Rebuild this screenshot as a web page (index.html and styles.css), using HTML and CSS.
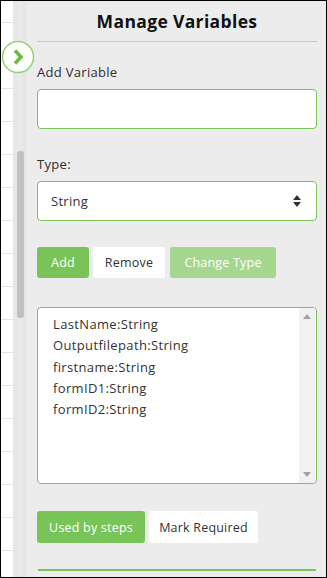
FILE: index.html
```html
<!DOCTYPE html>
<html>
<head>
<meta charset="utf-8">
<link rel="stylesheet" href="styles.css">
</head>
<body>
<div class="frame">
  <div class="sheet"></div>
  <div class="gutter"><div class="thumb"></div></div>
  <div class="panel">
    <h1 class="title">Manage Variables</h1>
    <label class="label label-first">Add Variable</label>
    <div class="input"></div>
    <label class="label label-type">Type:</label>
    <div class="select">
      <span>String</span>
      <svg class="updown" width="8" height="12" viewBox="0 0 8 12"><path d="M4 0 L8 5 L0 5 Z M4 12 L8 7 L0 7 Z" fill="#333"/></svg>
    </div>
    <div class="btnrow row1">
      <button class="btn btn-green w-add">Add</button>
      <button class="btn btn-white w-remove">Remove</button>
      <button class="btn btn-light w-change">Change Type</button>
    </div>
    <div class="list">
      <div class="items">
        <div class="item">LastName:String</div>
        <div class="item">Outputfilepath:String</div>
        <div class="item">firstname:String</div>
        <div class="item">formID1:String</div>
        <div class="item">formID2:String</div>
      </div>
      <div class="lscroll">
        <svg width="8" height="5" viewBox="0 0 8 5"><path d="M4 0 L8 5 L0 5 Z" fill="#a3a3a3"/></svg>
        <svg width="8" height="5" viewBox="0 0 8 5"><path d="M0 0 L8 0 L4 5 Z" fill="#a3a3a3"/></svg>
      </div>
    </div>
    <div class="btnrow row2">
      <button class="btn btn-green w-used">Used by steps</button>
      <button class="btn btn-white w-mark">Mark Required</button>
    </div>
    <div class="greenline"></div>
  </div>
  <div class="toggle">
    <svg width="34" height="34" viewBox="0 0 34 34"><circle cx="17" cy="17" r="15.5" fill="#fff" stroke="#93d175" stroke-width="1.5"/><path d="M14 10.5 L20 17 L14 23.5" fill="none" stroke="#6bbd45" stroke-width="3.6" stroke-linejoin="miter"/></svg>
  </div>
</div>
</body>
</html>
```
FILE: styles.css
```css
* { box-sizing: border-box; }
html, body { margin: 0; padding: 0; }
body {
  width: 327px;
  height: 578px;
  overflow: hidden;
  font-family: "Open Sans", "DejaVu Sans", sans-serif;
  color: #333;
}
.frame {
  position: relative;
  width: 327px;
  height: 578px;
  border: 1px solid #000;
  display: flex;
  background: #ececec;
}
.sheet {
  width: 12px;
  background-color: #fff;
  background-image: repeating-linear-gradient(to bottom, transparent 0, transparent 21px, #e3e3e3 21px, #e3e3e3 22px, transparent 22px, transparent 33px);
}
.gutter {
  width: 13px;
  background: linear-gradient(to right, #e6e6e6, #e9e9e9 60%, #e4e4e4);
  padding-top: 150px;
  display: flex;
  justify-content: center;
}
.thumb {
  width: 7px;
  height: 167px;
  border-radius: 3px;
  background: #c1c1c1;
  margin-left: 1px;
}
.panel {
  flex: 1;
  padding: 0 9px 0 11px;
  display: flex;
  flex-direction: column;
}
.title {
  margin: 0;
  padding: 8px 0 8px;
  height: 41px;
  font-size: 17.5px;
  line-height: 24px;
  font-weight: 700;
  letter-spacing: 0.35px;
  text-align: center;
  color: #111;
  border-bottom: 1px solid #c9c9c9;
}
.label {
  display: block;
  font-size: 13px;
  line-height: 20px;
  letter-spacing: 0.3px;
  color: #2f2f2f;
}
.label-first { margin-top: 20px; }
.label-type { margin-top: 25px; }
.input {
  margin-top: 7px;
  height: 40px;
  background: #fff;
  border: 1px solid #79c35a;
  border-radius: 4px;
}
.select {
  margin-top: 7px;
  height: 40px;
  background: #fff;
  border: 1px solid #79c35a;
  border-radius: 4px;
  display: flex;
  align-items: center;
  justify-content: space-between;
  padding: 0 15px 0 13px;
  font-size: 13px;
  letter-spacing: 0.3px;
  color: #333;
}
.btnrow {
  display: flex;
  gap: 4px;
}
.row1 { margin-top: 26px; }
.row1 .btn { height: 31px; }
.row2 { margin-top: 27px; }
.btn {
  height: 32px;
  border: none;
  border-radius: 3px;
  font-family: inherit;
  font-size: 12.5px;
  letter-spacing: 0.2px;
  padding: 0;
}
.btn-green { background: #78c459; color: #fff; }
.btn-white { background: #fff; color: #333; border-radius: 2px; }
.btn-light { background: #a6d790; color: #fff; margin-left: 1px; }
.w-add { width: 52px; }
.w-remove { width: 72px; }
.w-change { width: 106px; }
.w-used { width: 108px; }
.w-mark { width: 109px; }
.list {
  margin-top: 29px;
  height: 177px;
  background: #fff;
  border: 1px solid #79c35a;
  border-radius: 4px;
  display: flex;
}
.items {
  flex: 1;
  padding: 6px 0 0 15px;
  font-size: 13px;
  line-height: 21.3px;
  letter-spacing: 0.35px;
  color: #333;
}
.lscroll {
  width: 16px;
  margin-right: 1px;
  background: #f1f1f1;
  display: flex;
  flex-direction: column;
  justify-content: space-between;
  align-items: center;
  padding: 6px 0 6px;
}
.greenline {
  margin-top: 26px;
  height: 2px;
  flex-shrink: 0;
  background: #79c35a;
  margin-left: 1px;
  margin-right: 1px;
}
.toggle {
  position: absolute;
  left: 0;
  top: 39px;
  width: 34px;
  height: 34px;
}
.toggle svg { display: block; }
```
